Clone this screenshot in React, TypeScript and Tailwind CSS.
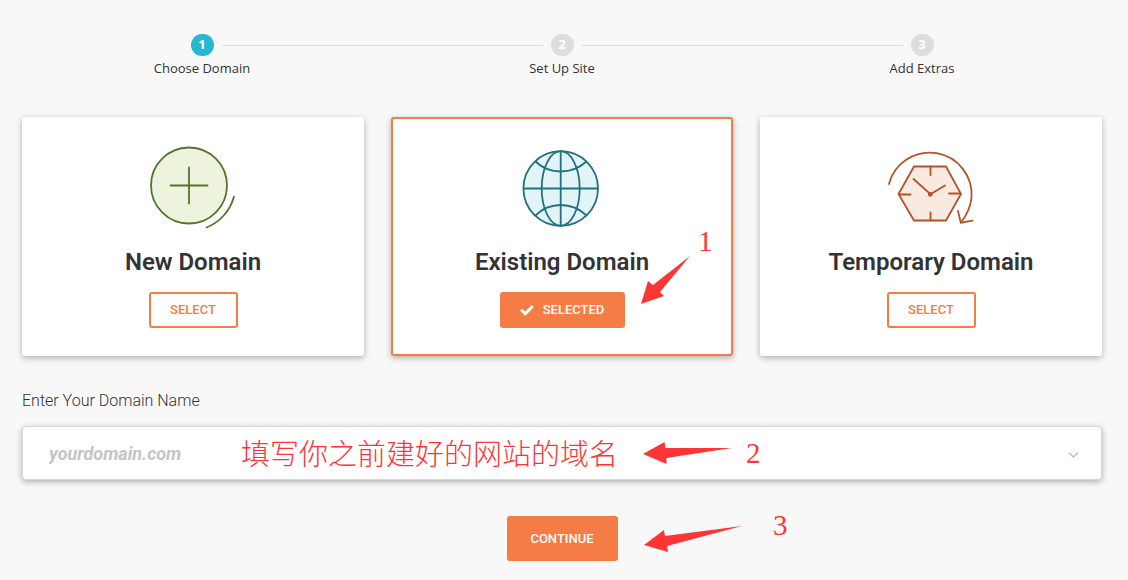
import { useState } from "react";
import clsx from "clsx";

export default function App() {
    const [selected, setSelected] = useState("existing");

    return (
        <main className="min-h-screen bg-[#f8f8f8] pt-[34px] pb-5 pl-[22px] pr-[26px] font-['Roboto',sans-serif] text-[#333]">
            <Steps />

            <section className="mt-10 grid grid-cols-3 gap-[27px]">
                {domains.map((domain) => (
                    <DomainCard
                        key={domain.id}
                        title={domain.title}
                        icon={domain.icon}
                        active={selected === domain.id}
                        onSelect={() => setSelected(domain.id)}
                    >
                        {domain.id === "existing" && (
                            <>
                                <Arrow
                                    className="absolute left-[calc(50%+79px)] top-[137px] h-12 w-[50px]"
                                    viewBox="0 0 50 48"
                                    points="0,48 7,25 12,29 49,0 19,36 23,40"
                                />
                                <Note className="absolute left-[calc(50%+136px)] top-[100px]">
                                    1
                                </Note>
                            </>
                        )}
                    </DomainCard>
                ))}
            </section>

            <form onSubmit={(e) => e.preventDefault()}>
                <label
                    htmlFor="domain"
                    className="mt-[33px] block text-base leading-6 font-light"
                >
                    Enter Your Domain Name
                </label>
                <div className="relative mt-[13px] flex h-[54px] items-center rounded-sm border border-[#d8d8d8] bg-white shadow-[0_2px_6px_rgba(0,0,0,0.3)]">
                    <input
                        id="domain"
                        type="text"
                        placeholder="yourdomain.com"
                        className="h-full min-w-0 flex-1 bg-transparent pl-[26px] text-lg font-bold outline-none placeholder:text-[#c4c4c4] placeholder:italic"
                    />
                    <button
                        type="button"
                        aria-label="Show domains"
                        className="px-[22px] text-[#bbb]"
                    >
                        <svg
                            viewBox="0 0 11 6"
                            className="mt-1 h-[6px] w-[11px]"
                            fill="none"
                            stroke="currentColor"
                            strokeWidth="1.3"
                        >
                            <path d="M1 .7l4.5 4.3L10 .7" />
                        </svg>
                    </button>
                    <Note className="pointer-events-none absolute left-[218px] top-[6px]">
                        填写你之前建好的网站的域名
                    </Note>
                    <Arrow
                        className="absolute left-[calc(50%+81px)] top-[14px] h-6 w-[89px]"
                        viewBox="0 0 89 24"
                        points="0,13 21.5,1 22.5,7 89,7 23.5,17 23.5,23"
                    />
                    <Note className="pointer-events-none absolute left-[calc(50%+184px)] top-1">
                        2
                    </Note>
                </div>

                <div className="relative mt-9 flex justify-center">
                    <button
                        type="submit"
                        className="h-[45px] w-[111px] rounded-[3px] bg-[#f57c45] text-[13px] font-medium text-white"
                    >
                        CONTINUE
                    </button>
                    <Arrow
                        className="absolute left-[calc(50%+82px)] top-[10px] h-[27px] w-[98px]"
                        viewBox="0 0 98 27"
                        points="0,19 20,4 21,10 98,0 23,20 24,26"
                    />
                    <Note className="absolute left-[calc(50%+211px)] top-[-13px]">
                        3
                    </Note>
                </div>
            </form>
        </main>
    );
}

function Steps() {
    return (
        <ol className="grid grid-cols-3 font-['Open_Sans',sans-serif] text-[13px]">
            {steps.map((step, i) => (
                <li key={step} className="text-center">
                    <div className="flex items-center gap-2">
                        <span
                            className={clsx(
                                "h-px flex-1",
                                i > 0 && "bg-[#ddd]"
                            )}
                        />
                        <span
                            className={clsx(
                                "flex h-[22px] w-[23px] items-center justify-center rounded-full font-bold text-white",
                                i === 0 ? "bg-[#24b8d2]" : "bg-[#ddd]"
                            )}
                        >
                            {i + 1}
                        </span>
                        <span
                            className={clsx(
                                "h-px flex-1",
                                i < steps.length - 1 && "bg-[#ddd]"
                            )}
                        />
                    </div>
                    <p
                        className={clsx(
                            "mt-[3px] leading-[18px]",
                            i === 0 && "font-medium"
                        )}
                    >
                        {step}
                    </p>
                </li>
            ))}
        </ol>
    );
}

type CardProps = {
    title: string;
    icon: () => React.ReactNode;
    active: boolean;
    onSelect: () => void;
    children?: React.ReactNode;
};

function DomainCard({ title, icon: Icon, active, onSelect, children }: CardProps) {
    return (
        <article
            className={clsx(
                "relative flex flex-col items-center rounded-[3px] border-2 bg-white pt-[26px] pb-[26px] shadow-[0_2px_6px_rgba(0,0,0,0.3)]",
                active ? "border-[#f57c45]" : "border-white"
            )}
        >
            <Icon />
            <h2 className="mt-[11px] text-2xl leading-8 font-semibold">
                {title}
            </h2>
            <button
                type="button"
                aria-pressed={active}
                onClick={onSelect}
                className={clsx(
                    "mt-[14px] flex h-9 items-center justify-center rounded-[3px] border-2 border-[#f57c45] text-[13px] font-medium",
                    active
                        ? "w-[125px] gap-[9px] bg-[#f57c45] text-white"
                        : "w-[89px] text-[#f57c45]"
                )}
            >
                {active && (
                    <svg
                        viewBox="0 0 14 12"
                        className="h-3 w-[14px]"
                        fill="none"
                        stroke="currentColor"
                        strokeWidth="3"
                    >
                        <path d="M1.2 5.8l4 4L12.8 2" />
                    </svg>
                )}
                {active ? "SELECTED" : "SELECT"}
            </button>
            {children}
        </article>
    );
}

function PlusIcon() {
    return (
        <svg
            viewBox="0 0 100 90"
            className="h-[90px] w-[100px]"
            fill="none"
            stroke="#55742f"
            strokeWidth="1.8"
            strokeLinecap="round"
            aria-hidden="true"
        >
            <circle cx="46" cy="40.5" r="38" fill="#edf3dc" />
            <path d="M46 22.5v36M27.5 40.5h37" />
            <path d="M91 51.5A46 46 0 0 1 63.5 82.5" />
        </svg>
    );
}

function GlobeIcon() {
    return (
        <svg
            viewBox="0 0 100 90"
            className="h-[90px] w-[100px]"
            fill="none"
            stroke="#22717e"
            strokeWidth="1.8"
            aria-hidden="true"
        >
            <circle cx="48.7" cy="43.5" r="37.3" fill="#e3f4f9" />
            <ellipse cx="48.7" cy="43.5" rx="19" ry="37.3" />
            <path d="M48.7 6.2v74.6M11.4 43.5H86" />
            <path d="M23.5 16.5Q34 26.5 48.7 26.5T74.5 16.5M23.5 70.5Q34 60 48.7 60T74.5 70.5" />
        </svg>
    );
}

function ClockIcon() {
    return (
        <svg
            viewBox="0 0 100 90"
            className="h-[90px] w-[100px]"
            fill="none"
            stroke="#b4532a"
            strokeWidth="1.8"
            strokeLinecap="round"
            aria-hidden="true"
        >
            <path d="M33 21.5h32L80 49 65 75.5H33L17.5 49z" fill="#f8e9e1" />
            <path d="M49.5 21.5V30M49.5 67.5v8M18 49.5h11.5M68 48.500h11.500" />
            <path d="M32.500 34l17 15.200L64 40.500" />
            <circle cx="49.300" cy="49.300" r="1.500" fill="#b4532a" />
            <path d="M8 39A42 42 0 0 1 90.500 53Q89 66 80 77.500" />
            <path d="M77 66l2.800 11.700L91.500 75.700" />
        </svg>
    );
}

type ArrowProps = { className: string; viewBox: string; points: string };

function Arrow({ className, viewBox, points }: ArrowProps) {
    return (
        <svg
            viewBox={viewBox}
            className={clsx("pointer-events-none", className)}
            fill="#fc3636"
            aria-hidden="true"
        >
            <polygon points={points} />
        </svg>
    );
}

function Note({
    className,
    children,
}: {
    className: string;
    children: React.ReactNode;
}) {
    return (
        <span
            className={clsx(
                "font-['Liberation_Serif','Noto_Sans_CJK_SC',serif] text-[29px] leading-[44px] font-light whitespace-nowrap text-[#fc3636]",
                className
            )}
        >
            {children}
        </span>
    );
}

const steps = ["Choose Domain", "Set Up Site", "Add Extras"];

const domains = [
    { id: "new", title: "New Domain", icon: PlusIcon },
    { id: "existing", title: "Existing Domain", icon: GlobeIcon },
    { id: "temporary", title: "Temporary Domain", icon: ClockIcon },
];
